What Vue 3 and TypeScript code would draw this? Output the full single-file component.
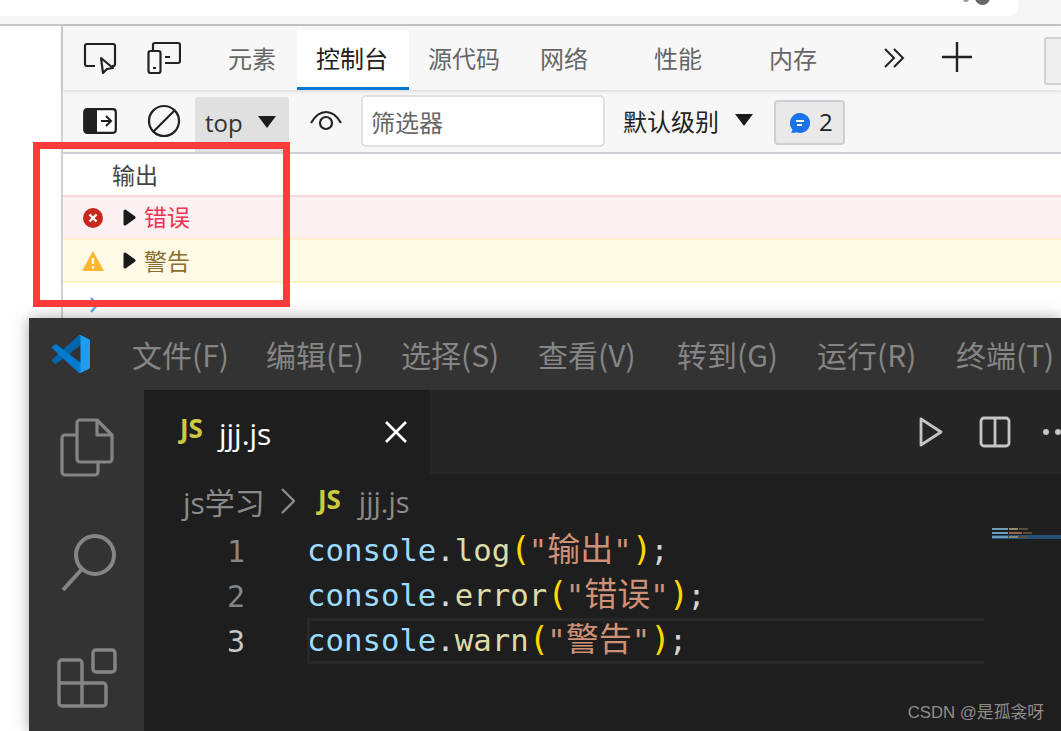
<script setup lang="ts">
const tabs = [
  { label: '元素', active: false, wide: false },
  { label: '控制台', active: true, wide: false },
  { label: '源代码', active: false, wide: false },
  { label: '网络', active: false, wide: false },
  { label: '性能', active: false, wide: true },
  { label: '内存', active: false, wide: true },
]
const menus = [
  { label: '文件(F)', width: 134 },
  { label: '编辑(E)', width: 135 },
  { label: '选择(S)', width: 137 },
  { label: '查看(V)', width: 139 },
  { label: '转到(G)', width: 140 },
  { label: '运行(R)', width: 139 },
  { label: '终端(T)', width: 140 },
]
</script>

<template>
  <div class="page">
    <header class="chrome">
      <div class="address">
        <i class="dot-a"></i><i class="dot-b"></i>
      </div>
    </header>
    <div class="browser">
      <div class="blank"></div>
      <section class="devtools">
        <div class="tabrow">
          <svg class="ic" width="34" height="34" viewBox="0 0 34 34" fill="none" stroke="#222" stroke-width="2.2">
            <path d="M12 25H4a2 2 0 0 1-2-2V5a2 2 0 0 1 2-2h26a2 2 0 0 1 2 2v18a2 2 0 0 1-2 2h-1" />
            <path d="M18 17l12 10-6 1-4 4z" stroke-linejoin="round" />
          </svg>
          <svg class="ic ic-device" width="34" height="34" viewBox="0 0 34 34" fill="none" stroke="#222" stroke-width="2.2">
            <path d="M6 9V4a2 2 0 0 1 2-2h23a2 2 0 0 1 2 2v16a2 2 0 0 1-2 2H18" />
            <rect x="1.5" y="10" width="12" height="22" rx="2" />
            <path d="M6 27h3M18 16h5" />
          </svg>
          <nav class="tabs">
            <div v-for="t in tabs" :key="t.label" class="tab" :class="{ active: t.active, wide: t.wide }">{{ t.label }}</div>
          </nav>
          <svg class="more" width="22" height="24" viewBox="0 0 22 24" fill="none" stroke="#222" stroke-width="2">
            <path d="M1 3l9 9-9 9M10 3l9 9-9 9" />
          </svg>
          <svg class="plus" width="30" height="30" viewBox="0 0 30 30" stroke="#222" stroke-width="2.4">
            <path d="M0 15h30M15 0v30" />
          </svg>
          <div class="cut-btn"></div>
        </div>
        <div class="filterrow">
          <svg class="ic" width="34" height="26" viewBox="0 0 34 26">
            <rect x="1.2" y="1.2" width="31.6" height="23.6" rx="3" fill="#fff" stroke="#1f1f1f" stroke-width="2.2" />
            <path d="M2 3a2 2 0 0 1 2-2h10v24H4a2 2 0 0 1-2-2z" fill="#1f1f1f" />
            <path d="M18 13h10M23 8l5 5-5 5" fill="none" stroke="#1f1f1f" stroke-width="2" />
          </svg>
          <svg class="ic ic-block" width="34" height="34" viewBox="0 0 34 34" fill="none" stroke="#222" stroke-width="2.2">
            <circle cx="17" cy="17" r="15" />
            <path d="M6.5 27.5l21-21" />
          </svg>
          <div class="context">
            <span>top</span>
            <i class="caret"></i>
          </div>
          <svg class="eye" width="32" height="22" viewBox="0 0 32 22" fill="none" stroke="#222" stroke-width="2.2">
            <path d="M1 13C5 6 10 2 16 2s11 4 15 11" />
            <circle cx="16" cy="13" r="6" />
          </svg>
          <div class="filter">筛选器</div>
          <div class="level">默认级别</div>
          <i class="caret level-caret"></i>
          <div class="badge">
            <svg width="20" height="20" viewBox="0 0 20 20">
              <path d="M10 0a10 10 0 1 1-3.6 19.3C5 20 3 20 .8 19.6 2 18.6 2.4 17.3 2.4 16.5A10 10 0 0 1 10 0z" fill="#1a73e8" />
              <path d="M6 8h8M7 12h5" stroke="#fff" stroke-width="1.8" />
            </svg>
            <span>2</span>
          </div>
        </div>
        <div class="log plain"><span class="msg">输出</span></div>
        <div class="log error">
          <svg class="lv" width="22" height="22" viewBox="0 0 22 22">
            <circle cx="11" cy="11" r="10" fill="#c5281c" />
            <path d="M7.5 7.5l7 7M14.5 7.5l-7 7" stroke="#fff" stroke-width="2.4" />
          </svg>
          <svg class="arrow" width="13" height="17" viewBox="0 0 13 17">
            <path d="M2 2l9 6.5-9 6.5z" fill="#1a1a1a" stroke="#1a1a1a" stroke-width="3" stroke-linejoin="round" />
          </svg>
          <span class="text">错误</span>
        </div>
        <div class="log warn">
          <svg class="lv" width="22" height="20" viewBox="0 0 22 20">
            <path d="M11 0l11 20H0z" fill="#ffb52e" />
            <path d="M11 7v6M11 15v2.5" stroke="#fff" stroke-width="2.2" />
          </svg>
          <svg class="arrow" width="13" height="17" viewBox="0 0 13 17">
            <path d="M2 2l9 6.5-9 6.5z" fill="#1a1a1a" stroke="#1a1a1a" stroke-width="3" stroke-linejoin="round" />
          </svg>
          <span class="text">警告</span>
        </div>
        <div class="prompt">
          <svg width="9" height="16" viewBox="0 0 9 16" fill="none" stroke="#5aa7e8" stroke-width="2.4">
            <path d="M1 1l6 7-6 7" />
          </svg>
        </div>
      </section>
    </div>

    <div class="redbox"></div>

    <section class="vscode">
      <div class="titlebar">
        <svg class="logo" width="38" height="38" viewBox="0 0 100 100">
          <path d="M96.46 10.8 75.86.87a6.23 6.23 0 0 0-7.11 1.21L1.3 63.58a4.17 4.17 0 0 0 0 6.16l5.51 5.01a4.17 4.17 0 0 0 5.32.24L93.34 13.3A4.14 4.14 0 0 1 100 16.6v-.24a6.25 6.25 0 0 0-3.54-5.63Z" fill="#0065a9" />
          <path d="M96.46 89.2 75.86 99.13a6.23 6.23 0 0 1-7.11-1.21L1.3 36.42a4.17 4.17 0 0 1 0-6.16l5.51-5.01a4.17 4.17 0 0 1 5.32-.24L93.34 86.7A4.14 4.14 0 0 0 100 83.4v.24a6.25 6.25 0 0 1-3.54 5.63Z" fill="#007acc" />
          <path d="M75.86 99.13a6.23 6.23 0 0 1-7.11-1.2c2.3 2.3 6.25.67 6.25-2.59V4.66c0-3.26-3.94-4.89-6.25-2.59a6.23 6.23 0 0 1 7.11-1.2l20.6 9.91A6.25 6.25 0 0 1 100 16.41v67.18a6.25 6.25 0 0 1-3.54 5.63Z" fill="#1f9cf0" />
        </svg>
        <div class="menus">
          <span v-for="m in menus" :key="m.label" :style="{ width: m.width + 'px' }">{{ m.label }}</span>
        </div>
      </div>
      <div class="vbody">
        <aside class="activity">
          <svg class="act" width="54" height="60" viewBox="0 0 54 60" fill="none" stroke="#858585" stroke-width="3.2" stroke-linejoin="round">
            <path d="M17 17H5a3 3 0 0 0-3 3v34a3 3 0 0 0 3 3h30a3 3 0 0 0 3-3V44" />
            <path d="M37 2H20a3 3 0 0 0-3 3v36a3 3 0 0 0 3 3h29a3 3 0 0 0 3-3V17z" />
            <path d="M37 2v15h15" />
          </svg>
          <svg class="act act-search" width="58" height="60" viewBox="0 0 58 60" fill="none" stroke="#858585" stroke-width="4">
            <circle cx="35" cy="22" r="19" />
            <path d="M22 36L3 57" />
          </svg>
          <svg class="act act-ext" width="60" height="60" viewBox="0 0 60 60" fill="none" stroke="#858585" stroke-width="3.4" stroke-linejoin="round">
            <rect x="36" y="2" width="22" height="22" rx="3" />
            <path d="M25 58V15a3 3 0 0 0-3-3H5a3 3 0 0 0-3 3v40a3 3 0 0 0 3 3h41a3 3 0 0 0 3-3V38a3 3 0 0 0-3-3H2" />
          </svg>
        </aside>
        <main class="editor">
          <div class="tabbar">
            <div class="filetab">
              <span class="js">JS</span>
              <span class="fname">jjj.js</span>
              <svg class="close" width="22" height="22" viewBox="0 0 22 22" stroke="#fff" stroke-width="2.6">
                <path d="M1 1l20 20M21 1L1 21" />
              </svg>
            </div>
            <div class="actions">
              <svg width="24" height="30" viewBox="0 0 24 30" fill="none" stroke="#c5c5c5" stroke-width="2.8" stroke-linejoin="round">
                <path d="M2 2l20 13L2 28z" />
              </svg>
              <svg class="split" width="32" height="32" viewBox="0 0 32 32" fill="none" stroke="#c5c5c5" stroke-width="2.8">
                <rect x="2" y="2" width="28" height="28" rx="3" />
                <path d="M16 2v28" />
              </svg>
              <div class="dots"><i></i><i></i></div>
            </div>
          </div>
          <div class="crumbs">
            <span class="crumb">js学习</span>
            <svg class="chev" width="14" height="26" viewBox="0 0 14 26" fill="none" stroke="#8a8a8a" stroke-width="2.4">
              <path d="M1 1l12 12L1 25" />
            </svg>
            <span class="js crumb-js">JS</span>
            <span class="crumb crumb-file">jjj.js</span>
          </div>
          <div class="code">
            <div class="line">
              <span class="num">1</span>
              <code><span class="v">console</span><span class="p">.</span><span class="f">log</span><span class="b">(</span><span class="s">"<span class="zh">输出</span>"</span><span class="b">)</span><span class="p">;</span></code>
            </div>
            <div class="line">
              <span class="num">2</span>
              <code><span class="v">console</span><span class="p">.</span><span class="f">error</span><span class="b">(</span><span class="s">"<span class="zh">错误</span>"</span><span class="b">)</span><span class="p">;</span></code>
            </div>
            <div class="line current">
              <span class="num">3</span>
              <code><span class="v">console</span><span class="p">.</span><span class="f">warn</span><span class="b">(</span><span class="s">"<span class="zh">警告</span>"</span><span class="b">)</span><span class="p">;</span></code>
            </div>
          </div>
          <div class="minimap">
            <div class="mini-line"><i class="m1"></i><i class="m2"></i><i class="m3"></i></div>
            <div class="mini-line"><i class="m1"></i><i class="m2 long"></i><i class="m3"></i></div>
            <div class="mini-line hl"><i class="m1"></i><i class="m2"></i><i class="m3"></i></div>
          </div>
        </main>
      </div>
      <div class="mark">CSDN @是孤衾呀</div>
    </section>
  </div>
</template>

<style scoped>
.page {
  position: relative;
  width: 1061px;
  height: 731px;
  overflow: hidden;
  background: #fff;
  font-family: "Noto Sans CJK SC", "Open Sans", sans-serif;
}
.chrome {
  height: 24px;
  background: #f5f5f5;
  border-bottom: 2px solid #c6c6c6;
  box-sizing: content-box;
}
.address {
  position: relative;
  width: 1018px;
  height: 16px;
  background: #fff;
  border-radius: 0 0 8px 0;
}
.dot-a, .dot-b {
  position: absolute;
  border-radius: 50%;
}
.dot-a { left: 963px; top: -4px; width: 6px; height: 6px; background: #999; }
.dot-b { left: 975px; top: -10px; width: 15px; height: 15px; background: #666; }
.browser {
  display: flex;
  height: 705px;
}
.blank {
  width: 61px;
  flex: none;
  border-right: 2px solid #cdd0d4;
  box-sizing: content-box;
}
.devtools {
  flex: 1;
  min-width: 0;
}
.tabrow {
  display: flex;
  align-items: center;
  height: 64px;
  padding-left: 20px;
  background: #f7f7f7;
  box-shadow: 0 1px 4px rgba(0, 0, 0, .15);
  position: relative;
}
.ic { flex: none; margin-left: 0; }
.ic-device { margin-left: 30px; }
.tabs { display: flex; margin-left: 27px; align-self: stretch; margin-top: 4px; }
.tab {
  padding: 0 20px;
  height: 56px;
  line-height: 56px;
  font-size: 24px;
  color: #666;
}
.tab.active {
  color: #202020;
  background: #fff;
  border-bottom: 3px solid #0078d4;
  border-radius: 3px 3px 0 0;
  height: 57px;
  margin-left: 1px;
  padding: 0 21px 0 19px;
}
.tab.active + .tab { margin-left: -1px; }
.tab.wide { margin-left: 26px; }
.tab.wide:last-child { margin-left: 27px; }
.more { margin-left: 47px; flex: none; }
.plus { margin-left: 36px; flex: none; margin-top: -2px; }
.cut-btn {
  margin-left: 72px;
  margin-top: 6px;
  flex: 1;
  height: 44px;
  background: #eee;
  border: 2px solid #d0d0d0;
  border-right: 0;
  border-radius: 3px 0 0 3px;
}
.filterrow {
  display: flex;
  align-items: center;
  height: 62px;
  padding-left: 20px;
  background: #f7f7f7;
  border-bottom: 2px solid #cdd0d4;
  box-sizing: content-box;
}
.ic-block { margin-left: 30px; }
.context {
  margin-left: 14px;
  width: 94px;
  height: 55px;
  margin-top: 7px;
  background: #e0e0e0;
  border-radius: 3px 3px 0 0;
  display: flex;
  align-items: center;
  box-sizing: border-box;
  padding-left: 10px;
  font-size: 24px;
  color: #333;
  font-family: "Open Sans", sans-serif;
}
.context span { width: 53px; margin-top: -5px; }
.caret {
  display: block;
  width: 0;
  height: 0;
  border-left: 9px solid transparent;
  border-right: 9px solid transparent;
  border-top: 12px solid #1c1c1c;
  margin-top: -3px;
}
.context .caret { margin-top: -6px; }
.eye { margin-left: 21px; flex: none; }
.filter {
  margin-left: 19px;
  width: 244px;
  height: 52px;
  box-sizing: border-box;
  background: #fff;
  border: 2px solid #e0e0e0;
  border-radius: 5px;
  padding-left: 8px;
  line-height: 50px;
  font-size: 24px;
  color: #666;
}
.level {
  margin-left: 18px;
  font-size: 24px;
  color: #222;
  margin-top: -1px;
}
.level-caret { margin-left: 16px; }
.badge {
  margin-left: 21px;
  width: 71px;
  height: 45px;
  margin-top: 3px;
  box-sizing: border-box;
  background: #e9e9e9;
  border: 2px solid #ccd0d4;
  border-radius: 4px;
  display: flex;
  align-items: center;
  padding-left: 14px;
  gap: 9px;
  font-size: 24px;
  color: #222;
  font-family: "Open Sans", sans-serif;
}
.badge span { margin-top: -2px; }
.log {
  display: flex;
  align-items: center;
  font-size: 23px;
  box-sizing: border-box;
}
.plain { height: 41px; padding-left: 49px; color: #444; }
.msg { margin-top: -2px; }
.error {
  height: 45px;
  background: #fdf0f0;
  border-top: 2px solid #fcd7d9;
  border-bottom: 2px solid #fef2cf;
  color: #ee3355;
}
.warn {
  height: 43px;
  background: #fffae5;
  border-bottom: 2px solid #fdf1c0;
  color: #8a6d2a;
}
.lv { margin-left: 19px; flex: none; }
.arrow { margin-left: 19px; flex: none; }
.text { margin-left: 8px; margin-top: -3px; }
.warn .text { margin-top: -1px; }
.prompt { padding: 11px 0 0 27px; }

.redbox {
  position: absolute;
  left: 33px;
  top: 142px;
  width: 257px;
  height: 165px;
  box-sizing: border-box;
  border: 7px solid #ff3b3b;
}

.vscode {
  position: absolute;
  left: 29px;
  top: 318px;
  width: 1032px;
  height: 413px;
  background: #333;
  box-shadow: 0 0 14px rgba(0, 0, 0, .35);
}
.titlebar {
  height: 72px;
  display: flex;
  align-items: center;
  padding-left: 23px;
}
.logo { flex: none; }
.menus {
  display: flex;
  margin-left: 42px;
  font-size: 30px;
  color: #858585;
  white-space: nowrap;
}
.menus span { flex: none; }
.vbody {
  display: flex;
  height: 341px;
}
.activity {
  width: 115px;
  flex: none;
  display: flex;
  flex-direction: column;
  padding: 28px 0 0 31px;
  box-sizing: border-box;
}
.act { flex: none; }
.act-search { margin-top: 55px; }
.act-ext { margin-top: 55px; margin-left: -3px; }
.editor {
  flex: 1;
  min-width: 0;
  background: #1e1e1e;
  position: relative;
}
.tabbar {
  display: flex;
  height: 84px;
  background: #252526;
}
.filetab {
  width: 286px;
  flex: none;
  background: #1e1e1e;
  display: flex;
  align-items: center;
  box-sizing: border-box;
  padding-left: 36px;
}
.js {
  color: #cbcb41;
  font-weight: 700;
  font-size: 26px;
  font-family: "Open Sans", sans-serif;
}
.filetab .js { margin-top: -8px; }
.fname {
  color: #fff;
  font-size: 30px;
  margin-left: 16px;
  margin-top: 2px;
  font-family: "Open Sans", sans-serif;
}
.close { margin-left: 114px; flex: none; }
.actions {
  flex: 1;
  display: flex;
  align-items: center;
  padding-left: 489px;
}
.actions svg { flex: none; }
.split { margin-left: 36px; }
.dots { display: flex; gap: 6px; margin-left: 32px; }
.dots i { width: 6px; height: 6px; border-radius: 50%; background: #c5c5c5; }
.crumbs {
  height: 45px;
  display: flex;
  align-items: center;
  padding: 9px 0 0 39px;
  box-sizing: border-box;
  color: #8a8a8a;
  font-size: 30px;
}
.crumb { font-family: "Open Sans", "Noto Sans CJK SC", sans-serif; }
.chev { margin-left: 16px; flex: none; }
.crumb-js { margin-left: 23px; margin-top: -5px; }
.crumb-file { margin-left: 18px; font-size: 29px; }
.code { margin-top: 10px; }
.line {
  display: flex;
  height: 45px;
  align-items: center;
  font-family: "DejaVu Sans Mono", "Noto Sans CJK SC", monospace;
  font-size: 30.7px;
  white-space: pre;
}
.line code { font-family: inherit; margin-left: 62px; margin-top: -4px; }
.num {
  width: 101px;
  text-align: right;
  color: #858585;
  font-size: 30px;
  flex: none;
}
.current .num { color: #c6c6c6; }
.current::before {
  content: "";
  position: absolute;
  left: 163px;
  top: 228px;
  width: 677px;
  height: 46px;
  box-sizing: border-box;
  border: 3px solid #282828;
  border-right: 0;
}
.v { color: #9cdcfe; }
.p { color: #d4d4d4; }
.f { color: #dcdcaa; }
.b { color: #ffd700; font-size: 34px; letter-spacing: -2px; line-height: 1; }
.s { color: #ce9178; }
.zh {
  font-family: "Noto Sans CJK SC", sans-serif;
  font-size: 33px;
  line-height: 1;
}
.minimap {
  position: absolute;
  left: 848px;
  top: 137px;
  width: 69px;
}
.mini-line { display: flex; height: 4px; align-items: center; gap: 1px; }
.mini-line i { height: 2px; display: block; }
.m1 { width: 16px; background: #6f9db5; }
.m2 { width: 9px; background: #8c8b6e; }
.m2.long { width: 13px; background: #96644f; }
.m3 { width: 9px; background: #5a4c3a; }
.hl { background: #264f78; }
.mark {
  position: absolute;
  right: 17px;
  bottom: 8px;
  color: #8d8d8d;
  font-size: 16.8px;
  font-family: "Liberation Sans", "Noto Sans CJK SC", sans-serif;
}
</style>
